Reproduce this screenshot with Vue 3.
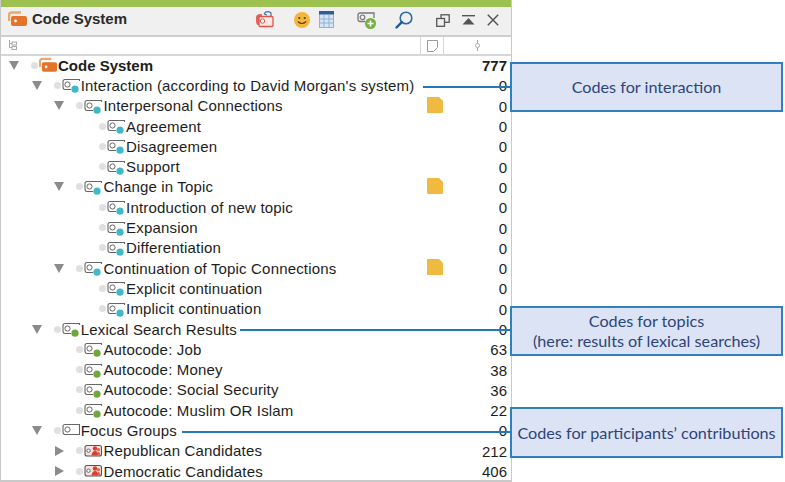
<script setup>
const teal = '#3fb8c9'
const green = '#6ea83c'
const rows = [
  { level: 0, arrow: 'down', icon: 'root', text: 'Code System', count: 777, bold: true },
  { level: 1, arrow: 'down', icon: 'code', color: teal, text: "Interaction (according to David Morgan's system)", count: 0 },
  { level: 2, arrow: 'down', icon: 'code', color: teal, text: 'Interpersonal Connections', count: 0, memo: true },
  { level: 3, icon: 'code', color: teal, text: 'Agreement', count: 0 },
  { level: 3, icon: 'code', color: teal, text: 'Disagreemen', count: 0 },
  { level: 3, icon: 'code', color: teal, text: 'Support', count: 0 },
  { level: 2, arrow: 'down', icon: 'code', color: teal, text: 'Change in Topic', count: 0, memo: true },
  { level: 3, icon: 'code', color: teal, text: 'Introduction of new topic', count: 0 },
  { level: 3, icon: 'code', color: teal, text: 'Expansion', count: 0 },
  { level: 3, icon: 'code', color: teal, text: 'Differentiation', count: 0 },
  { level: 2, arrow: 'down', icon: 'code', color: teal, text: 'Continuation of Topic Connections', count: 0, memo: true },
  { level: 3, icon: 'code', color: teal, text: 'Explicit continuation', count: 0 },
  { level: 3, icon: 'code', color: teal, text: 'Implicit continuation', count: 0 },
  { level: 1, arrow: 'down', icon: 'code', color: green, text: 'Lexical Search Results', count: 0 },
  { level: 2, icon: 'code', color: green, text: 'Autocode: Job', count: 63 },
  { level: 2, icon: 'code', color: green, text: 'Autocode: Money', count: 38 },
  { level: 2, icon: 'code', color: green, text: 'Autocode: Social Security', count: 36 },
  { level: 2, icon: 'code', color: green, text: 'Autocode: Muslim OR Islam', count: 22 },
  { level: 1, arrow: 'down', icon: 'code', text: 'Focus Groups', count: 0 },
  { level: 2, arrow: 'right', icon: 'people', text: 'Republican Candidates', count: 212 },
  { level: 2, arrow: 'right', icon: 'people', text: 'Democratic Candidates', count: 406 },
]
const connectors = [
  { top: 85.5, left: 423, width: 87 },
  { top: 329, left: 240, width: 271 },
  { top: 431, left: 182, width: 329 },
]
</script>

<template>
  <div class="stage">
    <section class="panel">
      <div class="accent"></div>
      <header class="titlebar">
        <svg class="title-icon" width="20" height="16" viewBox="0 0 20 16">
          <path d="M1 10V4.5Q1 1.5 4 1.5H13" fill="none" stroke="#f0a468" stroke-width="2.4" />
          <rect x="3" y="5" width="16" height="10" rx="2" fill="#e3742a" />
          <circle cx="7.5" cy="10" r="1.4" fill="#fff" />
        </svg>
        <h1 class="title">Code System</h1>
        <div class="tools">
          <svg class="tool t1" width="19" height="18" viewBox="0 0 19 18">
            <path d="M1 10Q0 4 5 4H7L6 15H3Q1 15 1 10Z" fill="#e2625a" />
            <rect x="4" y="6.5" width="14" height="10" rx="1" fill="#fbe6e2" stroke="#d9574a" stroke-width="1.3" />
            <circle cx="7.5" cy="11" r="2.2" fill="#fff" stroke="#d9574a" />
            <path d="M9 4Q12 0 16 3V6M9 4L11 1.5M9 4L12 5" fill="none" stroke="#3f6fa8" stroke-width="1.2" />
          </svg>
          <svg class="tool t2" width="16" height="16" viewBox="0 0 16 16">
            <circle cx="8" cy="8" r="8" fill="#f2b63c" />
            <circle cx="5.3" cy="6" r="1.1" fill="#5c4210" />
            <circle cx="10.7" cy="6" r="1.1" fill="#5c4210" />
            <path d="M3.8 9.5Q8 13.5 12.2 9.5" fill="none" stroke="#5c4210" stroke-width="1.1" />
          </svg>
          <svg class="tool t3" width="15" height="17" viewBox="0 0 15 17">
            <rect x="0.5" y="0.5" width="14" height="16" fill="#d6e4f4" stroke="#8fb2d8" />
            <rect x="0" y="0" width="15" height="3.5" fill="#2b5f95" />
            <path d="M5 4V16M10 4V16M1 8H14M1 12H14" stroke="#8fb2d8" stroke-width="1" />
          </svg>
          <svg class="tool t4" width="19" height="17" viewBox="0 0 19 17">
            <path d="M1 7V3Q1 1 3 1H17V6" fill="none" stroke="#777" stroke-width="1.3" />
            <path d="M1 7Q1 9.5 3 9.5H8" fill="none" stroke="#777" stroke-width="1.3" />
            <circle cx="5.5" cy="5.3" r="2.3" fill="none" stroke="#777" stroke-width="1.2" />
            <circle cx="13.5" cy="11.5" r="5.5" fill="#76b043" />
            <path d="M13.5 8.5V14.5M10.5 11.5H16.5" stroke="#fff" stroke-width="1.6" />
          </svg>
          <svg class="tool t5" width="18" height="18" viewBox="0 0 18 18">
            <circle cx="11" cy="7" r="5.8" fill="none" stroke="#2869a8" stroke-width="1.6" />
            <path d="M6.8 11.2L1.5 16.5" stroke="#1f5a96" stroke-width="2.4" stroke-linecap="round" />
          </svg>
          <svg class="tool t6" width="14" height="13" viewBox="0 0 14 13">
            <rect x="5" y="0.8" width="8.2" height="7.5" fill="none" stroke="#555" stroke-width="1.3" />
            <rect x="0.7" y="4.5" width="7.8" height="7.8" fill="#efefef" stroke="#555" stroke-width="1.3" />
          </svg>
          <svg class="tool t7" width="13" height="10" viewBox="0 0 13 10">
            <path d="M0 0.7H13" stroke="#555" stroke-width="1.4" />
            <path d="M6.5 3L12.5 9.5H0.5Z" fill="#555" />
          </svg>
          <svg class="tool t8" width="12" height="12" viewBox="0 0 12 12">
            <path d="M0.8 0.8L11.2 11.2M11.2 0.8L0.8 11.2" stroke="#555" stroke-width="1.5" />
          </svg>
        </div>
      </header>
      <div class="columns">
        <svg class="tree-glyph" width="9" height="11" viewBox="0 0 9 11">
          <path d="M1.5 0V7.5H4M1.5 3.5H4" fill="none" stroke="#a9a9a9" />
          <rect x="4" y="2" width="4.5" height="3" fill="none" stroke="#a9a9a9" />
          <rect x="4" y="6.5" width="4.5" height="3" fill="none" stroke="#a9a9a9" />
        </svg>
        <div class="col col-memo">
          <svg width="11" height="12" viewBox="0 0 11 12">
            <path d="M0.5 0.5H10.5V7.5L6.5 11.5H0.5Z" fill="none" stroke="#9a9a9a" />
          </svg>
        </div>
        <div class="col col-count">
          <svg width="5" height="11" viewBox="0 0 5 11">
            <path d="M2.5 0V3M2.5 8V11" stroke="#aaa" />
            <circle cx="2.5" cy="5.5" r="2" fill="none" stroke="#aaa" />
          </svg>
        </div>
      </div>
      <ul class="tree">
        <li
          v-for="row in rows"
          :key="row.text"
          class="row"
          :class="{ strong: row.bold }"
          :style="{ paddingLeft: 7 + row.level * 22.7 + 'px' }"
        >
          <span class="twist">
            <i v-if="row.arrow" :class="row.arrow"></i>
          </span>
          <span class="dot"></span>
          <svg v-if="row.icon === 'root'" class="icon" width="19" height="16" viewBox="0 0 20 16">
            <path d="M1 10V4.5Q1 1.5 4 1.5H13" fill="none" stroke="#f0a468" stroke-width="2.4" />
            <rect x="3" y="5" width="16" height="10" rx="2" fill="#e3742a" />
            <circle cx="7.5" cy="10" r="1.4" fill="#fff" />
          </svg>
          <svg v-else-if="row.icon === 'code'" class="icon" width="19" height="16" viewBox="0 0 19 16">
            <path d="M17.5 4V2.5H3Q1 2.5 1 4.5V10Q1 12.5 3 12.5H9" fill="none" stroke="#666" stroke-width="1.1" />
            <path v-if="!row.color" d="M9 12.5H17.5V4" fill="none" stroke="#666" stroke-width="1.1" />
            <circle cx="5.5" cy="7.5" r="2.6" fill="none" stroke="#666" stroke-width="1" />
            <circle v-if="row.color" cx="13" cy="12.2" r="3.6" :fill="row.color" />
          </svg>
          <svg v-else class="icon" width="19" height="16" viewBox="0 0 19 16">
            <rect x="1" y="2.5" width="16.5" height="10.5" rx="2" fill="#f6e2de" stroke="#555" stroke-width="1.1" />
            <circle cx="4.5" cy="7.7" r="1.7" fill="#fff" stroke="#666" />
            <circle cx="11" cy="5.5" r="2.2" fill="#d8402f" />
            <path d="M7.5 12.5Q8 8 11 8Q14 8 14.5 12.5Z" fill="#d8402f" />
            <circle cx="14.5" cy="6.5" r="1.6" fill="#e2604f" />
            <path d="M13.5 8.5Q16 8.5 16.5 12.5H14.5Z" fill="#e2604f" />
          </svg>
          <span class="label">{{ row.text }}</span>
          <svg v-if="row.memo" class="memo" width="16" height="16" viewBox="0 0 16 16">
            <path d="M0 1Q0 0 1 0H12L16 4V15Q16 16 15 16H1Q0 16 0 15Z" fill="#f0ba40" />
          </svg>
          <span class="count">{{ row.count }}</span>
        </li>
      </ul>
    </section>

    <div
      v-for="line in connectors"
      :key="line.top"
      class="connector"
      :style="{ top: line.top + 'px', left: line.left + 'px', width: line.width + 'px' }"
    ></div>
    <aside class="note note-a">Codes for interaction</aside>
    <aside class="note note-b">Codes for topics<br />(here: results of lexical searches)</aside>
    <aside class="note note-c">Codes for participants’ contributions</aside>
  </div>
</template>

<style>
html, body { margin: 0; background: #fff; }
</style>

<style scoped>
.stage {
  position: relative;
  width: 785px;
  height: 482px;
  overflow: hidden;
  background: #fff;
  font-family: "Liberation Sans", Arial, sans-serif;
}
.panel {
  width: 512px;
  height: 482px;
  box-sizing: border-box;
  border-left: 1px solid #c9c9c9;
  border-right: 1px solid #c9c9c9;
  border-bottom: 2px solid #c9c9c9;
  overflow: hidden;
}
.accent { height: 7px; background: #9cc14e; }
.titlebar {
  height: 28px;
  box-sizing: content-box;
  display: flex;
  align-items: center;
  padding: 0 0 0 7px;
  background: #f0f0f0;
  border-bottom: 2px solid #cfcfcf;
}
.title-icon { flex: none; margin-top: -4px; }
.title {
  flex: none;
  width: 101px;
  margin: -5px 0 0 4px;
  font-size: 15px;
  font-weight: 700;
  color: #2b2b2b;
  white-space: nowrap;
}
.tools { position: relative; flex: 1; height: 100%; }
.tool { position: absolute; }
.t1 { left: 122px; top: 3px; }
.t2 { left: 161px; top: 5px; }
.t3 { left: 186px; top: 4px; }
.t4 { left: 224px; top: 5px; }
.t5 { left: 262px; top: 4px; }
.t6 { left: 303px; top: 7px; }
.t7 { left: 329px; top: 8px; }
.t8 { left: 354px; top: 7px; }
.columns {
  height: 17px;
  display: flex;
  align-items: center;
  background: #fff;
  border-bottom: 2px solid #d6d6d6;
}
.tree-glyph { margin-left: 7px; margin-right: auto; }
.col {
  height: 100%;
  display: flex;
  align-items: center;
  justify-content: center;
  box-sizing: border-box;
  border-left: 1px solid #d6d6d6;
}
.col-memo { width: 23px; }
.col-count { width: 68px; }
.tree { list-style: none; margin: -1px 0 0; padding: 0; }
.row {
  height: 20.3px;
  display: flex;
  align-items: center;
  font-size: 15px;
  color: #1d1d1d;
  white-space: nowrap;
  position: relative;
}
.strong { font-weight: 700; }
.twist {
  flex: none;
  width: 12px;
  height: 12px;
  margin-right: 11px;
  display: flex;
  align-items: center;
  justify-content: center;
}
.down {
  width: 0;
  height: 0;
  border-left: 5.5px solid transparent;
  border-right: 5.5px solid transparent;
  border-top: 9px solid #8b8b8b;
}
.right {
  width: 0;
  height: 0;
  border-top: 5.5px solid transparent;
  border-bottom: 5.5px solid transparent;
  border-left: 9px solid #8b8b8b;
}
.dot {
  flex: none;
  width: 7px;
  height: 7px;
  border-radius: 50%;
  background: #e0e0e0;
  margin-right: 1px;
}
.icon { flex: none; }
.label { letter-spacing: 0.17px; }
.strong .label { letter-spacing: 0; }
.memo { position: absolute; left: 426px; top: 1px; }
.count { position: absolute; right: 4px; top: 50%; transform: translateY(-50%); }
.connector {
  position: absolute;
  height: 2px;
  background: #2379b8;
}
.note {
  position: absolute;
  box-sizing: border-box;
  display: flex;
  align-items: center;
  justify-content: center;
  text-align: center;
  left: 510px;
  width: 273px;
  background: #dce3f5;
  border: 2px solid #2f80bd;
  color: #2d4578;
  font-family: Lato, "Open Sans", sans-serif;
  font-size: 16.2px;
  line-height: 20px;
  white-space: nowrap;
}
.note-a { top: 62px; height: 50px; }
.note-b { top: 306px; height: 50px; }
.note-c { top: 407px; height: 51px; }
</style>
